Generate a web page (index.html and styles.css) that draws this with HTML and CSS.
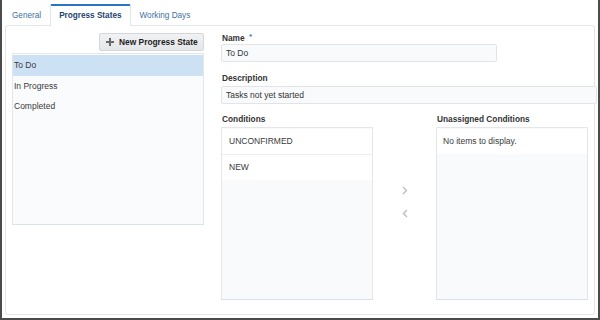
FILE: index.html
```html
<!DOCTYPE html>
<html>
<head>
<meta charset="utf-8">
<link rel="stylesheet" href="styles.css">
</head>
<body>
<div class="frame">
  <div class="tabs">
    <div class="tab">General</div>
    <div class="tab active">Progress States</div>
    <div class="tab">Working Days</div>
  </div>
  <div class="panel">
    <div class="left">
      <div class="toolbar">
        <button class="btn">
          <svg class="plus" width="8" height="8" viewBox="0 0 8 8"><path d="M4 0V8M0 4H8" stroke="#6a6a6a" stroke-width="2"/></svg>
          <span>New Progress State</span>
        </button>
      </div>
      <ul class="list">
        <li class="sel">To Do</li>
        <li>In Progress</li>
        <li>Completed</li>
      </ul>
    </div>
    <div class="right">
      <div class="label first">Name <span class="req">*</span></div>
      <div class="input name">To Do</div>
      <div class="label">Description</div>
      <div class="input desc">Tasks not yet started</div>
      <div class="shuttle">
        <div class="col">
          <div class="label">Conditions</div>
          <div class="box">
            <div class="row sep">UNCONFIRMED</div>
            <div class="row">NEW</div>
          </div>
        </div>
        <div class="arrows">
          <svg width="6" height="9" viewBox="0 0 6 9"><path d="M1 1L4.5 4.5L1 8" fill="none" stroke="#b7bdc5" stroke-width="1.4"/></svg>
          <svg width="6" height="9" viewBox="0 0 6 9"><path d="M5 1L1.5 4.5L5 8" fill="none" stroke="#b7bdc5" stroke-width="1.4"/></svg>
        </div>
        <div class="col">
          <div class="label">Unassigned Conditions</div>
          <div class="box">
            <div class="row empty">No items to display.</div>
          </div>
        </div>
      </div>
    </div>
  </div>
</div>
</body>
</html>
```
FILE: styles.css
```css
* { box-sizing: border-box; }
html, body { margin: 0; padding: 0; background: #fff; }
body { font-family: "Liberation Sans", Arial, sans-serif; font-size: 8.5px; color: #333; }

.frame {
  width: 600px;
  height: 320px;
  border: 2px solid #4b4b4b;
  border-top: none;
  padding-top: 4px;
  background: #fff;
}

.tabs {
  display: flex;
  height: 21px;
  padding-left: 1px;
  position: relative;
  z-index: 2;
}
.tab {
  height: 21px;
  padding: 0 8px;
  border: 1px solid transparent;
  border-top-width: 2px;
  border-bottom: none;
  line-height: 19px;
  font-size: 8.2px;
  color: #42709f;
}
.tab.active {
  height: 22px;
  margin-bottom: -1px;
  border-color: #e1e4e8;
  border-top-color: #2a74c4;
  background: #fff;
  font-weight: bold;
  color: #1e456f;
  line-height: 20px;
  border-radius: 2px 2px 0 0;
}

.panel {
  margin: 0 3px;
  height: 290px;
  border: 1px solid #e1e4e8;
  border-radius: 3px;
  padding: 7px 6px 0 6px;
  display: flex;
  position: relative;
  z-index: 1;
}

.left { width: 192px; flex: none; }
.toolbar { display: flex; justify-content: flex-end; }
.btn {
  width: 105px;
  height: 18px;
  padding: 0 0 0 6px;
  border: 1px solid #d3d7dc;
  border-radius: 2px;
  background: linear-gradient(#f1f2f4, #e4e6e9);
  display: flex;
  align-items: center;
  font-family: "Liberation Sans", Arial, sans-serif;
  font-size: 8.4px;
  font-weight: bold;
  color: #1e1e1e;
}
.plus { margin-right: 5px; flex: none; }

.list {
  list-style: none;
  margin: 2px 0 0 0;
  padding: 1px 0 0 0;
  height: 172px;
  border: 1px solid #e3e6ea;
  border-bottom-color: #dbe2ea;
  background: #fafbfd;
}
.list li {
  height: 20.5px;
  line-height: 20.5px;
  padding-left: 1px;
  color: #3a3a3a;
}
.list li.sel { background: #cde1f4; }

.right {
  flex: 1;
  margin-left: 17px;
  display: flex;
  flex-direction: column;
}
.label {
  flex: none;
  font-weight: bold;
  font-size: 8.3px;
  line-height: 11px;
  height: 11px;
  padding-left: 1px;
  color: #333;
  margin-top: 11px;
  margin-bottom: 2px;
}
.label.first { margin-top: 0; margin-bottom: 0; }
.req { color: #3576c4; font-size: 8px; position: relative; top: -2px; margin-left: 2px; }

.input {
  height: 18px;
  line-height: 16px;
  border: 1px solid #e1e5ea;
  border-radius: 2px;
  background: #f9fafc;
  padding-left: 4px;
  color: #333;
}
.input.name { width: 276px; }
.input.desc { margin-right: -9px; position: relative; z-index: 3; }

.shuttle { display: flex; }
.shuttle .label { margin-top: 10px; }
.col { width: 152px; flex: none; display: flex; flex-direction: column; }
.box {
  height: 173px;
  border: 1px solid #e3e6ea;
  border-bottom-color: #d6dfea;
  background: #f9fafc;
  padding-top: 1px;
}
.row {
  height: 25px;
  line-height: 25px;
  padding-left: 7px;
  background: #fff;
  color: #3a3a3a;
}
.row.sep { border-bottom: 1px solid #eceef1; height: 26px; }
.row.empty { padding-left: 6px; line-height: 25px; }

.arrows {
  flex: 1;
  display: flex;
  flex-direction: column;
  align-items: center;
  padding-top: 82px;
  gap: 14px;
}
.arrows svg { display: block; }
```
